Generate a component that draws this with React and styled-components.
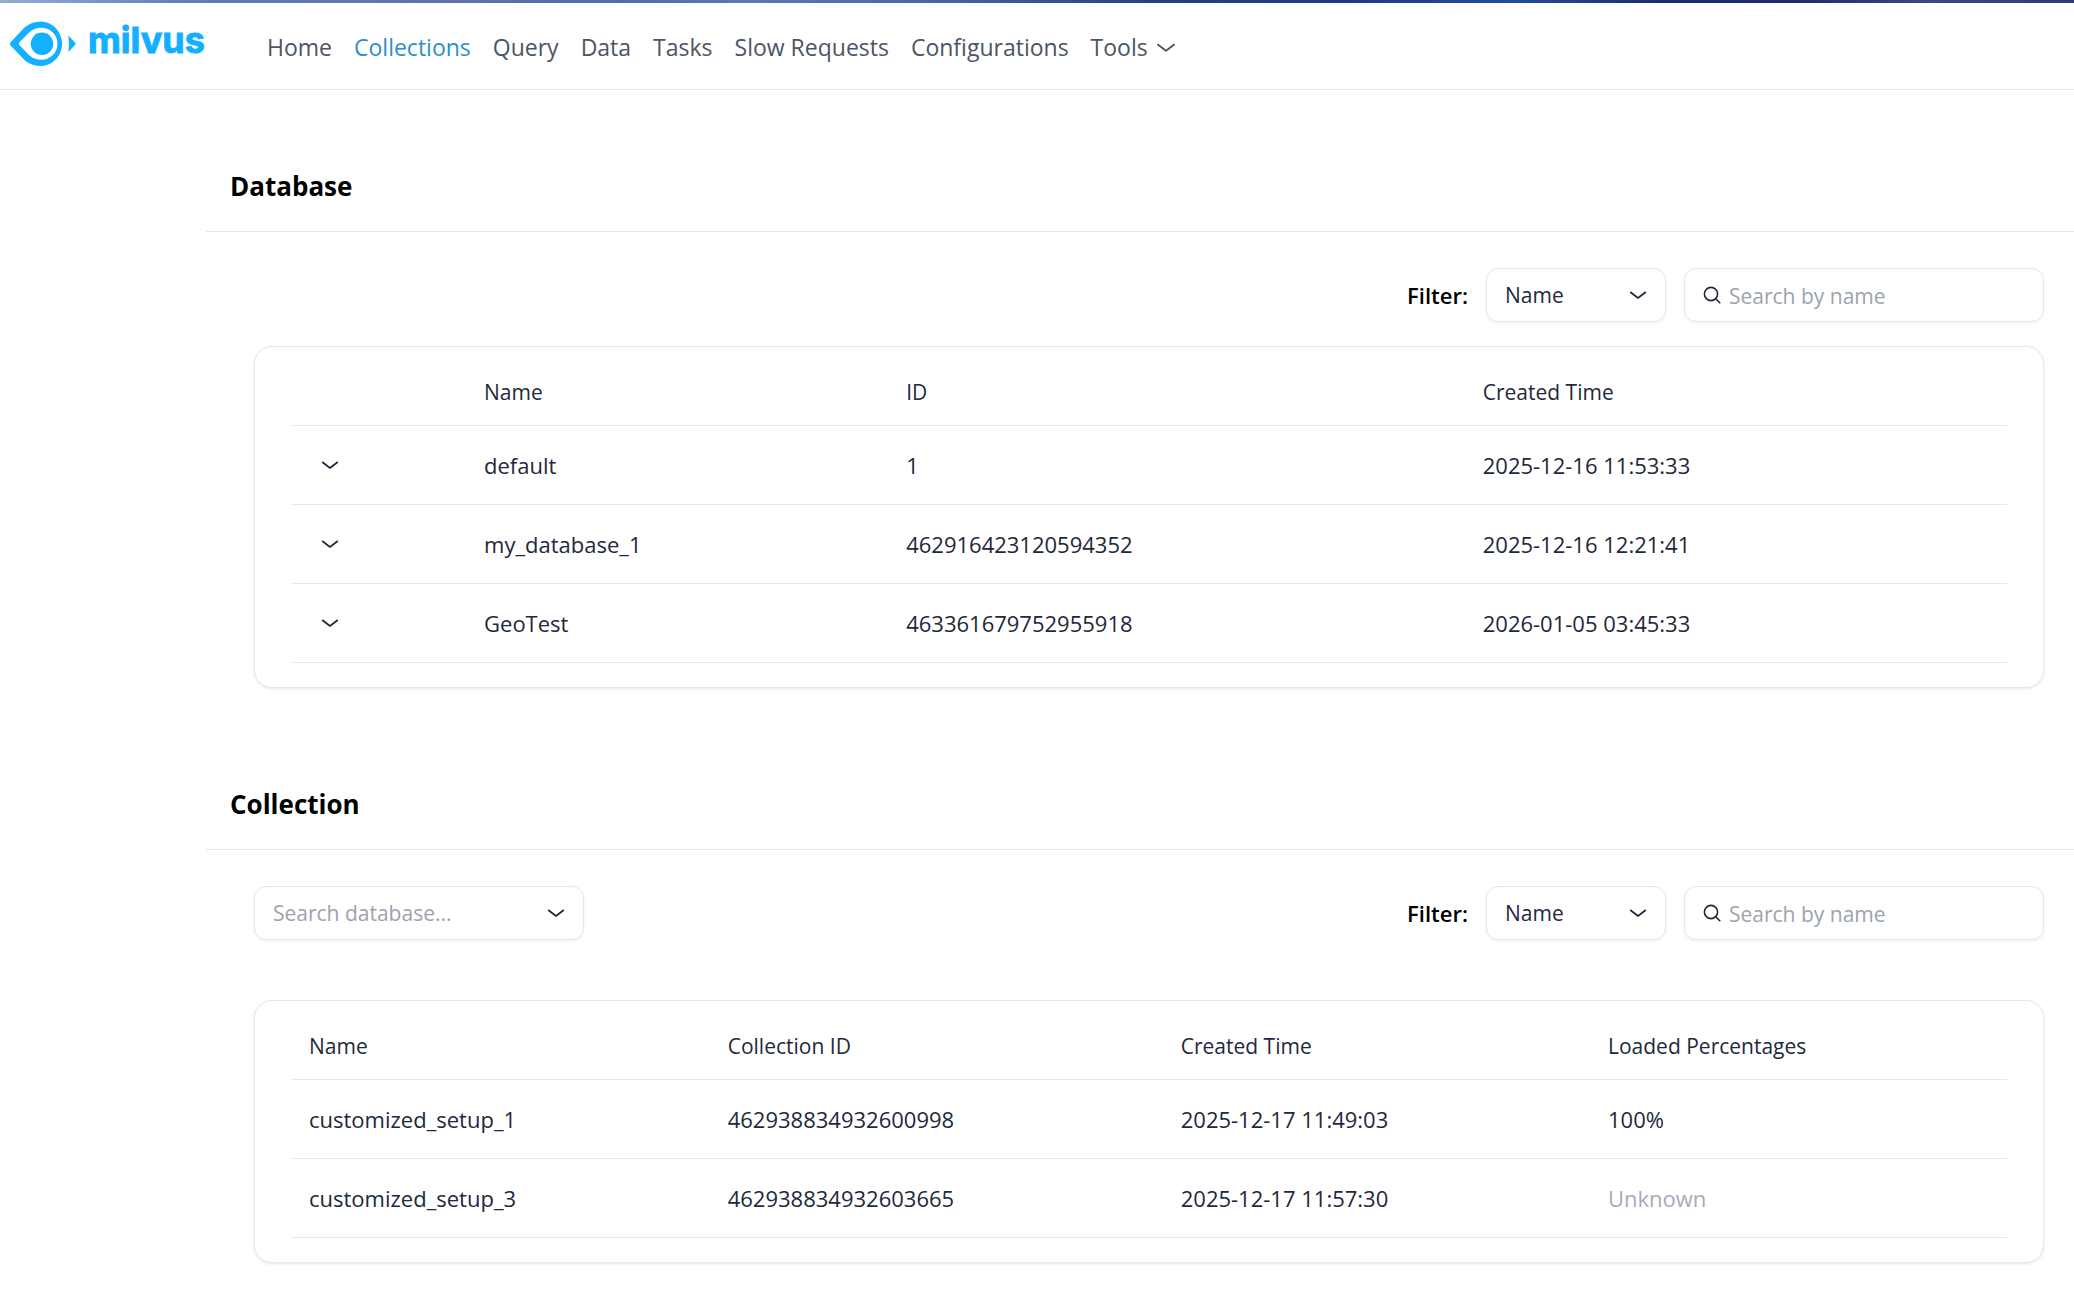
import React, { useState } from "react";
import styled, { createGlobalStyle, css } from "styled-components";

const databases = [
  { name: "default", id: "1", createdTime: "2025-12-16 11:53:33" },
  {
    name: "my_database_1",
    id: "462916423120594352",
    createdTime: "2025-12-16 12:21:41",
  },
  {
    name: "GeoTest",
    id: "463361679752955918",
    createdTime: "2026-01-05 03:45:33",
  },
];

const collections = [
  {
    name: "customized_setup_1",
    id: "462938834932600998",
    createdTime: "2025-12-17 11:49:03",
    loaded: "100%",
  },
  {
    name: "customized_setup_3",
    id: "462938834932603665",
    createdTime: "2025-12-17 11:57:30",
    loaded: null,
  },
];

const navItems = [
  "Home",
  "Collections",
  "Query",
  "Data",
  "Tasks",
  "Slow Requests",
  "Configurations",
];

const ChevronIcon = ({ width = 18, height = 10 }) => (
  <svg
    width={width}
    height={height}
    viewBox="0 0 18 10"
    fill="none"
    stroke="currentColor"
    strokeWidth="1.7"
    aria-hidden="true"
  >
    <path d="M1.2 2 L9 8 L16.8 2" strokeLinejoin="round" />
  </svg>
);

const SearchIcon = () => (
  <svg
    width="18"
    height="18"
    viewBox="0 0 18 18"
    fill="none"
    stroke="currentColor"
    strokeWidth="1.6"
    aria-hidden="true"
  >
    <circle cx="8" cy="8" r="6.6" />
    <path d="M12.7 12.7 L16.8 16.8" strokeLinecap="round" />
  </svg>
);

const LogoMark = () => (
  <svg width="66" height="46" viewBox="0 0 66 46" aria-hidden="true">
    <path
      fill="#12b0ff"
      fillRule="evenodd"
      d="M0.8 21 L14.5 6.5 C19 2.5 24.5 0.5 31.5 0.5 A22 22.3 0 0 1 31.5 45 C24.5 45 19 43 14.5 39 L0.8 24.8 Q-0.8 22.9 0.8 21 Z M9.5 21.2 Q8.5 22.7 9.5 24.2 L19.5 34.5 C23 37.4 27 38.8 31.5 38.8 A16 16 0 0 0 31.5 6.8 C27 6.8 23 8.2 19.5 11.1 Z"
    />
    <circle cx="32" cy="22.8" r="11.2" fill="#12b0ff" />
    <path
      fill="#12b0ff"
      d="M58.4 14.6 L65.4 22 Q66 22.8 65.4 23.6 L58.4 31 Q59.4 22.8 58.4 14.6 Z"
    />
  </svg>
);

const FilterGroup = ({ prefix }) => {
  const [filter, setFilter] = useState("name");
  const [keyword, setKeyword] = useState("");
  return (
    <Filter>
      <FilterLabel htmlFor={`${prefix}-filter`}>Filter:</FilterLabel>
      <SelectBox $width="180px">
        <Select
          id={`${prefix}-filter`}
          value={filter}
          onChange={(e) => setFilter(e.target.value)}
        >
          <option value="name">Name</option>
          <option value="id">ID</option>
        </Select>
        <ChevronIcon />
      </SelectBox>
      <SearchBox>
        <SearchIcon />
        <SearchInput
          type="text"
          aria-label="Search by name"
          placeholder="Search by name"
          value={keyword}
          onChange={(e) => setKeyword(e.target.value)}
        />
      </SearchBox>
    </Filter>
  );
};

const DatabaseTable = () => (
  <Card>
    <Table>
      <colgroup>
        <Col $width="10.2%" />
        <Col $width="24.6%" />
        <Col $width="33.6%" />
        <Col $width="31.6%" />
      </colgroup>
      <thead>
        <tr>
          <Th />
          <Th>Name</Th>
          <Th>ID</Th>
          <Th>Created Time</Th>
        </tr>
      </thead>
      <tbody>
        {databases.map((db) => (
          <tr key={db.name}>
            <Td>
              <ExpandButton type="button" aria-label={`Expand ${db.name}`}>
                <ChevronIcon />
              </ExpandButton>
            </Td>
            <Td>{db.name}</Td>
            <Td>{db.id}</Td>
            <Td>{db.createdTime}</Td>
          </tr>
        ))}
      </tbody>
    </Table>
  </Card>
);

const CollectionTable = () => (
  <Card>
    <Table>
      <colgroup>
        <Col $width="24.4%" />
        <Col $width="26.4%" />
        <Col $width="24.9%" />
        <Col $width="24.3%" />
      </colgroup>
      <thead>
        <tr>
          <Th>Name</Th>
          <Th>Collection ID</Th>
          <Th>Created Time</Th>
          <Th>Loaded Percentages</Th>
        </tr>
      </thead>
      <tbody>
        {collections.map((item) => (
          <tr key={item.id}>
            <Td>{item.name}</Td>
            <Td>{item.id}</Td>
            <Td>{item.createdTime}</Td>
            <Td $muted={!item.loaded}>{item.loaded || "Unknown"}</Td>
          </tr>
        ))}
      </tbody>
    </Table>
  </Card>
);

export default function App() {
  const [database, setDatabase] = useState("");
  return (
    <>
      <GlobalStyle />
      <TopStripe />
      <Header>
        <Logo href="#home" aria-label="milvus">
          <LogoMark />
          <LogoText>milvus</LogoText>
        </Logo>
        <Nav>
          {navItems.map((item) => (
            <NavLink key={item} href="#" $active={item === "Collections"}>
              {item}
            </NavLink>
          ))}
          <NavButton type="button">
            Tools
            <ChevronIcon width={20} height={11} />
          </NavButton>
        </Nav>
      </Header>
      <Main>
        <Section>
          <Title>Database</Title>
          <Body $gap="24px">
            <Toolbar>
              <FilterGroup prefix="database" />
            </Toolbar>
            <DatabaseTable />
          </Body>
        </Section>
        <Section>
          <Title>Collection</Title>
          <Body $gap="60px">
            <Toolbar>
              <SelectBox $width="330px" $placeholder={!database}>
                <Select
                  aria-label="Search database"
                  value={database}
                  onChange={(e) => setDatabase(e.target.value)}
                >
                  <option value="">Search database...</option>
                  {databases.map((db) => (
                    <option key={db.name} value={db.name}>
                      {db.name}
                    </option>
                  ))}
                </Select>
                <ChevronIcon />
              </SelectBox>
              <FilterGroup prefix="collection" />
            </Toolbar>
            <CollectionTable />
          </Body>
        </Section>
      </Main>
    </>
  );
}

const GlobalStyle = createGlobalStyle`
  * {
    box-sizing: border-box;
  }

  body {
    margin: 0;
    background: #fff;
    color: #1e293b;
    font-family: "Open Sans", "Noto Sans", sans-serif;
    font-size: 21px;
    line-height: 30px;
  }

  button,
  input,
  select {
    font: inherit;
    color: inherit;
  }
`;

const TopStripe = styled.div`
  height: 3px;
  background: linear-gradient(
    90deg,
    #93aed2 0%,
    #5f80b5 9%,
    #5f72aa 22%,
    #4d6cab 30%,
    #5d79b1 36%,
    #4666a5 45%,
    #24407f 56%,
    #1d3c86 65%,
    #264c97 73%,
    #1a2f70 80%,
    #1a2c68 86%,
    #3a4a80 93%,
    #2a3d75 100%
  );
`;

const Header = styled.header`
  display: flex;
  align-items: flex-start;
  height: 87px;
  padding: 18px 10px 0;
  border-bottom: 1px solid #e5e7eb;
`;

const Logo = styled.a`
  display: flex;
  align-items: flex-start;
  gap: 12px;
  width: 257px;
  text-decoration: none;
`;

const LogoText = styled.span`
  color: #12b0ff;
  font-family: Inter, sans-serif;
  font-size: 36px;
  font-weight: 700;
  line-height: 38px;
  -webkit-text-stroke: 1px #12b0ff;
`;

const Nav = styled.nav`
  display: flex;
  gap: 22px;
  padding-top: 11px;
`;

const navItemStyle = css`
  color: ${(props) => (props.$active ? "#2b8fcb" : "#4b5563")};
  font-size: 23px;
  line-height: 30px;
  text-decoration: none;
  white-space: nowrap;
`;

const NavLink = styled.a`
  ${navItemStyle}
`;

const NavButton = styled.button`
  ${navItemStyle}
  display: flex;
  align-items: center;
  gap: 8px;
  padding: 0;
  border: none;
  background: none;
`;

const Main = styled.main`
  margin-left: 206px;
  padding-bottom: 38px;
`;

const Section = styled.section`
  padding-top: 72px;

  & + & {
    padding-top: 92px;
  }
`;

const Title = styled.h2`
  margin: 0;
  padding: 6px 24px 27px;
  border-bottom: 1px solid #e5e7eb;
  color: #000;
  font-size: 26px;
  font-weight: 700;
  line-height: 36px;
`;

const Body = styled.div`
  display: flex;
  flex-direction: column;
  gap: ${(props) => props.$gap};
  padding: 36px 30px 0 48px;
`;

const Toolbar = styled.div`
  display: flex;
  align-items: center;
`;

const Filter = styled.div`
  display: flex;
  align-items: center;
  gap: 18px;
  margin-left: auto;
`;

const FilterLabel = styled.label`
  color: #000;
  font-size: 22px;
  font-weight: 600;
`;

const boxStyle = css`
  height: 54px;
  border: 1px solid #e2e8f0;
  border-radius: 12px;
  background: #fff;
  box-shadow: 0 1px 3px rgba(15, 23, 42, 0.06);
`;

const SelectBox = styled.div`
  ${boxStyle}
  display: grid;
  align-items: center;
  width: ${(props) => props.$width};
  color: ${(props) => (props.$placeholder ? "#9ca3af" : "#1e293b")};

  > * {
    grid-area: 1 / 1;
  }

  svg {
    justify-self: end;
    margin-right: 18px;
    color: #1e293b;
    pointer-events: none;
  }
`;

const Select = styled.select`
  width: 100%;
  height: 100%;
  padding: 0 48px 0 18px;
  border: none;
  border-radius: 12px;
  background: none;
  appearance: none;
`;

const SearchBox = styled.div`
  ${boxStyle}
  display: flex;
  align-items: center;
  gap: 8px;
  width: 360px;
  padding: 0 18px;
`;

const SearchInput = styled.input`
  flex: 1;
  min-width: 0;
  padding: 2px 0 0;
  border: none;
  outline: none;
  background: none;

  &::placeholder {
    color: #9ca3af;
    opacity: 1;
  }
`;

const Card = styled.div`
  padding: 24px 36px;
  border: 1px solid #e2e8f0;
  border-radius: 18px;
  background: #fff;
  box-shadow: 0 1px 3px rgba(15, 23, 42, 0.1);
`;

const Table = styled.table`
  width: 100%;
  border-collapse: separate;
  border-spacing: 0;
  table-layout: fixed;
`;

const Col = styled.col`
  width: ${(props) => props.$width};
`;

const Th = styled.th`
  padding: 6px 18px 18px;
  border-bottom: 1px solid #e2e8f0;
  font-weight: 400;
  text-align: left;
`;

const Td = styled.td`
  padding: 24px 18px;
  border-bottom: 1px solid #e2e8f0;
  color: ${(props) => (props.$muted ? "#a3adba" : "#1e293b")};
  font-size: 22px;
`;

const ExpandButton = styled.button`
  display: flex;
  align-items: center;
  height: 30px;
  padding: 0 12px;
  border: none;
  background: none;
`;
